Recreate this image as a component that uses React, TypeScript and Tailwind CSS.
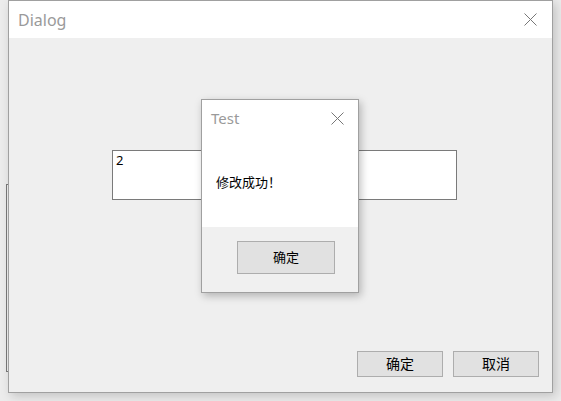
import React from "react";

const FONT = { fontFamily: '"Noto Sans", "Noto Sans CJK SC", sans-serif' };

function CloseIcon() {
  return (
    <svg width="13" height="13" viewBox="0 0 13 13" className="block">
      <path d="M0.5 0.5 L12.5 12.5 M12.5 0.5 L0.5 12.5" stroke="#777" strokeWidth="1" fill="none" />
    </svg>
  );
}

export default function App() {
  return (
    <div className="relative w-[561px] h-[401px] overflow-hidden bg-[#ececec]" style={FONT}>
      {/* window behind, only its left edge peeks out */}
      <div className="absolute left-[6px] top-[184px] w-[10px] h-[188px] border border-[#7a7a7a] bg-[#f0f0f0]" />

      {/* main dialog */}
      <div className="absolute left-[8px] top-0 w-[545px] h-[393px] border border-[#a0a0a0] bg-[#efefef] shadow-[3px_3px_10px_rgba(0,0,0,0.18)] flex flex-col">
        <div className="h-[37px] bg-white flex items-center justify-between pl-[9px] pr-[15px] shrink-0">
          <span className="text-[16px] text-[#9a9a9a] leading-none">Dialog</span>
          <CloseIcon />
        </div>
        <div className="relative flex-1">
          <div className="absolute left-[103px] top-[112px] w-[345px] h-[50px] border border-[#7a7a7a] bg-white px-[3px] pt-[1px] text-[13px] leading-[16px] text-black">
            2
          </div>
          <div className="absolute right-[13px] bottom-[15px] flex gap-[10px]">
            <button className="w-[86px] h-[26px] bg-[#e1e1e1] border border-[#adadad] text-[14px] text-black leading-none">
              确定
            </button>
            <button className="w-[86px] h-[26px] bg-[#e1e1e1] border border-[#adadad] text-[14px] text-black leading-none">
              取消
            </button>
          </div>
        </div>
      </div>

      {/* message box */}
      <div className="absolute left-[201px] top-[99px] w-[158px] h-[194px] border border-[#a0a0a0] bg-white shadow-[2px_3px_8px_rgba(0,0,0,0.25)] flex flex-col">
        <div className="h-[36px] flex items-center justify-between pl-[9px] pr-[14px] shrink-0">
          <span className="text-[15px] text-[#9a9a9a] leading-none">Test</span>
          <CloseIcon />
        </div>
        <div className="h-[91px] pl-[14px] pt-[38px] text-[13px] leading-[16px] text-black">
          修改成功！
        </div>
        <div className="flex-1 bg-[#f0f0f0] flex items-start pl-[35px] pt-[14px]">
          <button className="w-[98px] h-[33px] bg-[#e1e1e1] border border-[#adadad] text-[13px] text-black leading-none">
            确定
          </button>
        </div>
      </div>
    </div>
  );
}
